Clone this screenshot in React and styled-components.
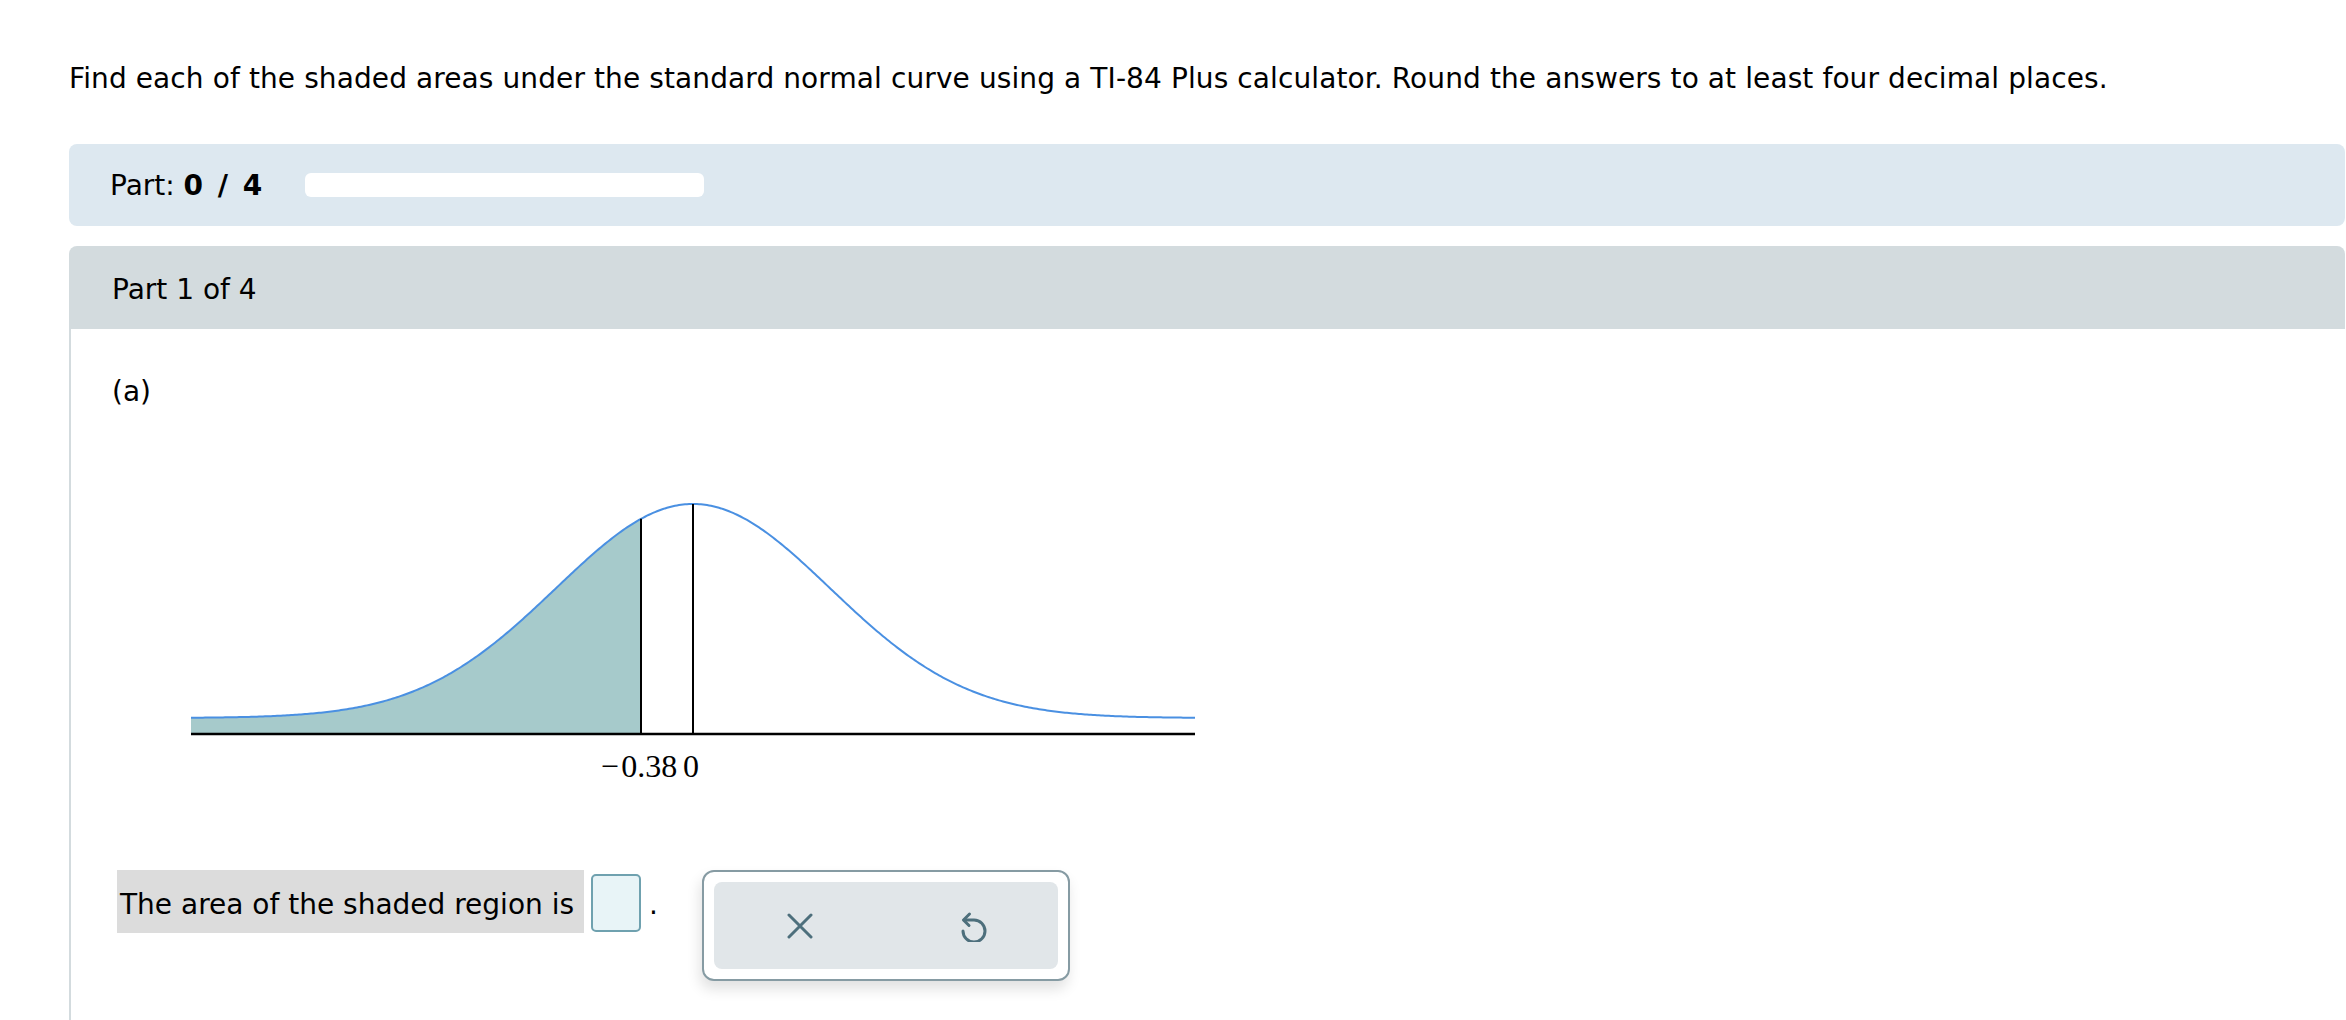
import React from "react";
import styled, { createGlobalStyle } from "styled-components";

const GlobalStyle = createGlobalStyle`
  html, body {
    margin: 0;
    padding: 0;
    background: #fff;
  }
  body {
    font-family: "DejaVu Sans", Verdana, sans-serif;
    color: #000;
    overflow: hidden;
  }
`;

const Page = styled.div`
  padding: 62px 1px 0 69px;
  height: 1020px;
  box-sizing: border-box;
  overflow: hidden;
`;

const Heading = styled.p`
  margin: 0;
  font-size: 28px;
  line-height: 34px;
  letter-spacing: 0.1px;
`;

const PartBar = styled.div`
  margin-top: 48px;
  height: 82px;
  background: #dde8f0;
  border-radius: 8px;
  display: flex;
  align-items: center;
  gap: 40px;
  padding-left: 41px;
  font-size: 28px;
`;

const PartCount = styled.b`
  letter-spacing: 2.5px;
`;

const Progress = styled.div`
  width: 399px;
  height: 24px;
  background: #fff;
  border-radius: 6px;
`;

const Section = styled.section`
  margin-top: 20px;
`;

const SectionHeader = styled.div`
  height: 83px;
  box-sizing: border-box;
  padding: 4px 0 0 43px;
  background: #d3dbde;
  border-radius: 8px 8px 0 0;
  display: flex;
  align-items: center;
  font-size: 28px;
`;

const SectionBody = styled.div`
  border-left: 2px solid #d3dbde;
  padding-left: 41px;
  height: 700px;
`;

const Label = styled.div`
  padding-top: 46px;
  font-size: 28px;
  line-height: 34px;
`;

const Graph = styled.svg`
  display: block;
  margin: 71px 0 0 68px;
`;

const AnswerRow = styled.div`
  margin-top: 80px;
  display: flex;
  align-items: flex-start;
  font-size: 28px;
`;

const Prompt = styled.span`
  margin-left: 5px;
  height: 63px;
  box-sizing: border-box;
  padding: 3px 10px 0 3px;
  line-height: 63px;
  background: #dcdcdc;
`;

const AnswerInput = styled.div`
  margin: 4px 0 0 7px;
  width: 50px;
  height: 58px;
  box-sizing: border-box;
  border: 2px solid #6fa1af;
  border-radius: 5px;
  background: #e8f4f7;
`;

const Dot = styled.span`
  margin-left: 8px;
  padding-top: 3px;
  line-height: 63px;
`;

const ToolPanel = styled.div`
  margin-left: 44px;
  width: 368px;
  height: 111px;
  box-sizing: border-box;
  border: 2px solid #869ba3;
  border-radius: 12px;
  background: #fff;
  padding: 10px;
  box-shadow: -2px 8px 14px rgba(0, 0, 0, 0.12);
`;

const ToolInner = styled.div`
  height: 100%;
  background: #e1e6e9;
  border-radius: 8px;
  display: flex;
`;

const ToolButton = styled.button`
  flex: 1;
  border: 0;
  background: transparent;
  display: flex;
  align-items: center;
  justify-content: center;
  padding: 0;
  cursor: pointer;
  color: #4d6f7c;
`;

function NormalCurve() {
  const cx = 513;
  const sigma = 137;
  const base = 238;
  const amp = 214;
  const left = 11;
  const right = 1015;
  const axisY = 254;
  const cut = 461;
  const yAt = (x) => {
    const z = (x - cx) / sigma;
    return base - amp * Math.exp(-(z * z) / 2);
  };

  const pts = [];
  for (let x = left; x <= right; x += 2) pts.push([x, yAt(x)]);
  const curve = pts.map(([x, y], i) => `${i ? "L" : "M"}${x} ${y.toFixed(2)}`).join(" ");

  const shadePts = pts.filter(([x]) => x <= cut);
  const shade =
    `M${left} ${axisY} ` +
    shadePts.map(([x, y]) => `L${x} ${y.toFixed(2)}`).join(" ") +
    ` L${cut} ${yAt(cut).toFixed(2)} L${cut} ${axisY} Z`;

  return (
    <Graph width="1040" height="310" viewBox="0 0 1040 310">
      <path d={shade} fill="#a6cacb" />
      <path d={curve} fill="none" stroke="#4a90e2" strokeWidth="2" />
      <line x1={cut} y1={yAt(cut)} x2={cut} y2={axisY} stroke="#000" strokeWidth="2" />
      <line x1={cx} y1={yAt(cx)} x2={cx} y2={axisY} stroke="#000" strokeWidth="2" />
      <line x1={left} y1={axisY} x2={right} y2={axisY} stroke="#000" strokeWidth="2.5" />
      <text x={cut - 2} y="297" textAnchor="middle" fontFamily="'Liberation Serif', serif" fontSize="32">
        −&#8202;0.38
      </text>
      <text x="511" y="297" textAnchor="middle" fontFamily="'Liberation Serif', serif" fontSize="32">
        0
      </text>
    </Graph>
  );
}

function ClearIcon() {
  return (
    <svg width="26" height="26" viewBox="0 0 26 26" fill="none" stroke="currentColor" strokeWidth="3" strokeLinecap="round">
      <path d="M2 2 L24 24 M24 2 L2 24" />
    </svg>
  );
}

function UndoIcon() {
  return (
    <svg width="30" height="32" viewBox="0 0 30 32" fill="none" stroke="currentColor" strokeWidth="3" strokeLinecap="round" strokeLinejoin="round">
      <path d="M7 10 H17 A11 11 0 1 1 6 21" />
      <path d="M12.5 4 L6.5 10 L12 15.5" />
    </svg>
  );
}

export default function App() {
  return (
    <>
      <GlobalStyle />
      <Page>
        <Heading>
          Find each of the shaded areas under the standard normal curve using a TI-84 Plus
          calculator. Round the answers to at least four decimal places.
        </Heading>
        <PartBar>
          <span>
            Part: <PartCount>0 / 4</PartCount>
          </span>
          <Progress />
        </PartBar>
        <Section>
          <SectionHeader>Part 1 of 4</SectionHeader>
          <SectionBody>
            <Label>(a)</Label>
            <NormalCurve />
            <AnswerRow>
              <Prompt>The area of the shaded region is</Prompt>
              <AnswerInput />
              <Dot>.</Dot>
              <ToolPanel>
                <ToolInner>
                  <ToolButton aria-label="Clear">
                    <ClearIcon />
                  </ToolButton>
                  <ToolButton aria-label="Undo">
                    <UndoIcon />
                  </ToolButton>
                </ToolInner>
              </ToolPanel>
            </AnswerRow>
          </SectionBody>
        </Section>
      </Page>
    </>
  );
}
